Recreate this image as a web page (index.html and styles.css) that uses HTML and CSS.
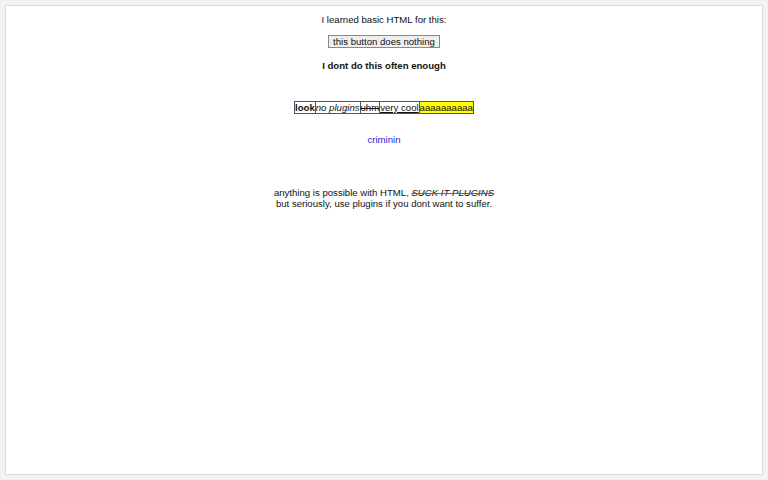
FILE: index.html
```html
<!DOCTYPE html>
<html>
<head>
<meta charset="utf-8">
<link rel="stylesheet" href="styles.css">
</head>
<body>
<div class="frame">
  <p class="intro">I learned basic HTML for this:</p>
  <button class="btn">this button does nothing</button>
  <p class="bold">I dont do this often enough</p>
  <table class="tbl">
    <tr>
      <td><b>look</b></td>
      <td><i>no plugins</i></td>
      <td><s>uhm</s></td>
      <td><u>very cool</u></td>
      <td class="yellow">aaaaaaaaaa</td>
    </tr>
  </table>
  <p class="link">criminin</p>
  <p class="outro">anything is possible with HTML, <i><s class="strike">SUCK IT PLUGINS</s></i><br>but seriously, use plugins if you dont want to suffer.</p>
</div>
</body>
</html>
```
FILE: styles.css
```css
html, body {
  margin: 0;
  padding: 0;
}
body {
  background: #f2f2f2;
  padding: 5px;
  font-family: "Liberation Sans", Arial, sans-serif;
  font-size: 9.6px;
  line-height: 11px;
  color: #111;
  box-sizing: border-box;
  height: 480px;
}
.frame {
  background: #fff;
  border: 1px solid #dcdcdc;
  height: 470px;
  box-sizing: border-box;
  display: flex;
  flex-direction: column;
  align-items: center;
}
.intro {
  margin: 8px 0 0;
}
.btn {
  margin: 10px 0 0;
  height: 13px;
  padding: 0 4px;
  font-family: "Liberation Sans", Arial, sans-serif;
  font-size: 9.6px;
  line-height: 11px;
  color: #111;
  background: #efefef;
  border: 1px solid #8a8a8a;
  border-radius: 0;
}
.bold {
  margin: 11.5px 0 0;
  font-weight: bold;
}
.tbl {
  margin-top: 30.5px;
  border-collapse: collapse;
  border: 1px solid #000;
}
.tbl td {
  border: 1px solid #555;
  padding: 0;
  line-height: 11px;
  font-size: 9.6px;
}
.tbl .yellow {
  background: #ffff00;
}
.link {
  margin: 20px 0 0;
  color: #2424cc;
}
.outro {
  margin: 41.5px 0 0;
  text-align: center;
}
.strike {
  text-decoration-color: #666;
}
```
